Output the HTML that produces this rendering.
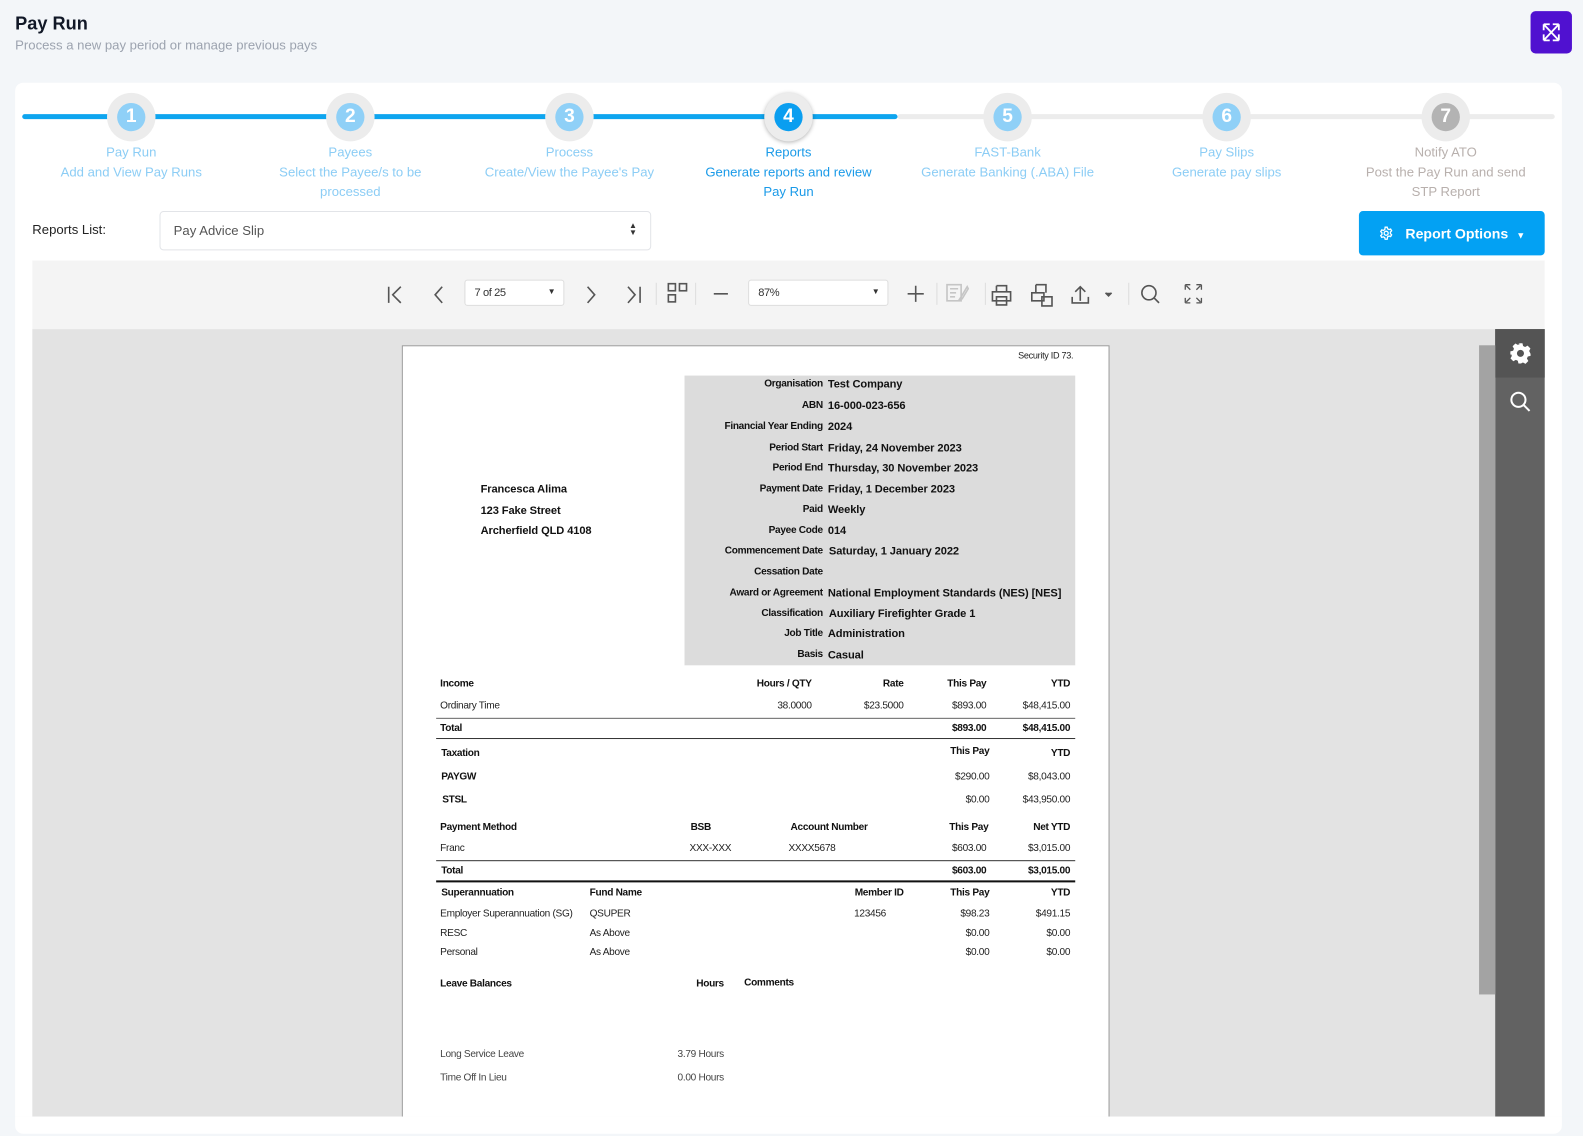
<!DOCTYPE html>
<html><head><meta charset="utf-8"><style>
*{margin:0;padding:0;box-sizing:border-box}
html,body{width:1583px;height:1136px;overflow:hidden;background:#f3f6f9}
#w{width:1568px;height:1125px;position:relative;transform:scale(1.0096);transform-origin:0 0;font-family:"Liberation Sans",sans-serif}
.a{position:absolute;white-space:nowrap}
.t{position:absolute;white-space:nowrap;font-size:10px;color:#222;line-height:14px;letter-spacing:-0.3px}
.b{font-weight:bold;color:#111}
.v{font-size:11px;font-weight:bold;color:#111;letter-spacing:-0.1px}
.st{position:absolute;text-align:center;font-size:13px;line-height:19.5px;width:220px;color:#8ccdf5}
.circ{position:absolute;width:48px;height:48px;border-radius:50%;background:#ececec;top:92px}
.circ div{position:absolute;left:10px;top:10px;width:28px;height:28px;border-radius:50%;background:#8fd0f7;color:#fff;font-weight:bold;font-size:19px;text-align:center;line-height:28px}
.ic{position:absolute;top:278px}
.hl{position:absolute;height:1px;background:#333;left:432px;width:633px}
</style></head><body><div id="w">
<div class="a" style="left:15px;top:13px;font-size:18px;font-weight:bold;color:#111827">Pay Run</div>
<div class="a" style="left:15px;top:37px;font-size:13px;color:#9ca3af">Process a new pay period or manage previous pays</div>
<div class="a" style="left:1516px;top:11px;width:41px;height:42px;background:#5011d0;border-radius:5px">
<svg width="41" height="42" viewBox="0 0 41 42" fill="none" stroke="#fff" stroke-width="1.8"><path d="M13 13l15 16M28 13L13 29M13 13h6M13 13v6M28 13h-6M28 13v6M13 29h6M13 29v-6M28 29h-6M28 29v-6"/></svg></div>

<div class="a" style="left:15px;top:82px;width:1532px;height:1041px;background:#fff;border-radius:8px"></div>
<div class="a" style="left:22px;top:113px;width:867px;height:5px;background:#0ea5ef;border-radius:3px"></div>
<div class="a" style="left:889px;top:113px;width:651px;height:5px;background:#ececec;border-radius:3px"></div>

<div class="circ" style="left:106px"><div>1</div></div>
<div class="circ" style="left:323px"><div>2</div></div>
<div class="circ" style="left:540px"><div>3</div></div>
<div class="circ" style="left:757px;box-shadow:0 1px 4px rgba(0,0,0,.3)"><div style="background:#0a9ef0">4</div></div>
<div class="circ" style="left:974px"><div>5</div></div>
<div class="circ" style="left:1191px"><div>6</div></div>
<div class="circ" style="left:1408px"><div style="background:#b3b3b3">7</div></div>

<div class="st" style="left:20px;top:141px">Pay Run<br>Add and View Pay Runs</div>
<div class="st" style="left:237px;top:141px">Payees<br>Select the Payee/s to be<br>processed</div>
<div class="st" style="left:454px;top:141px">Process<br>Create/View the Payee's Pay</div>
<div class="st" style="left:671px;top:141px;color:#1a9ae8">Reports<br>Generate reports and review<br>Pay Run</div>
<div class="st" style="left:888px;top:141px">FAST-Bank<br>Generate Banking (.ABA) File</div>
<div class="st" style="left:1105px;top:141px">Pay Slips<br>Generate pay slips</div>
<div class="st" style="left:1322px;top:141px;color:#b8b0ad">Notify ATO<br>Post the Pay Run and send<br>STP Report</div>

<div class="a" style="left:32px;top:220px;font-size:13px;color:#222">Reports List:</div>
<div class="a" style="left:158px;top:209px;width:487px;height:39px;border:1px solid #e2e4e8;border-radius:4px;font-size:13px;color:#555;padding:11px 13px">Pay Advice Slip<span style="position:absolute;right:13px;top:10px;font-size:8px;line-height:7px;color:#333">▲<br>▼</span></div>
<div class="a" style="left:1346px;top:209px;width:184px;height:44px;background:#03a1f3;border-radius:4px;color:#fff;font-weight:bold;font-size:14px;line-height:44px;padding-left:46px">Report Options <span style="font-size:9px;margin-left:4px">▼</span>
<svg style="position:absolute;left:20px;top:15px" width="14" height="14" viewBox="0 0 14 14" fill="none" stroke="#fff" stroke-width="1.3"><circle cx="7" cy="7" r="2"/><path d="M6 1h2l.4 1.6 1.4.8 1.6-.5 1 1.7-1.2 1.2v1.6l1.2 1.2-1 1.7-1.6-.5-1.4.8L8 13H6l-.4-1.6-1.4-.8-1.6.5-1-1.7 1.2-1.2V6.6L1.6 5.4l1-1.7 1.6.5 1.4-.8z"/></svg></div>

<div class="a" style="left:32px;top:258px;width:1498px;height:68px;background:#f4f4f4"></div>
<div class="a" style="left:32px;top:326px;width:1498px;height:780px;background:#e3e3e3"></div>
<svg class="ic" style="left:370px" width="840" height="28" viewBox="0 0 840 28" fill="none" stroke="#555" stroke-width="1.6">
<path d="M15 6v16M27 6l-8 8 8 8"/><path d="M68 6l-7 8 7 8"/>
<path d="M212 6l7 8-7 8"/><path d="M252 6l7 8-7 8M264 6v16"/>
<path d="M280 2v22M319 2v22" stroke="#ddd" stroke-width="1"/>
<rect x="292" y="3" width="7" height="7"/><rect x="303" y="3" width="7" height="7"/><rect x="292" y="14" width="7" height="7"/>
<path d="M337 13h14"/><path d="M529 13h16M537 5v16"/>
<path d="M558 2v22M606 2v22M748 2v22" stroke="#ddd" stroke-width="1"/>
<path d="M568 4h14v16h-14zM571 8h8M571 12h6M571 16h5M588 6l-6 10-2 3 3-1 6-10z" stroke="#c5c5c5"/>
<path d="M617 5h10v6M617 11v-6M613 11h18v9h-18zM617 16h10v8h-10z"/>
<path d="M656 4h10v8M656 12v-8M652 12h12v8h-12zM662 16h10v9h-10z"/>
<path d="M700 20v-14M695 11l5-5 5 5M692 16v6h16v-6"/><path d="M725 12l3 3 3-3" fill="#555"/>
<circle cx="768" cy="12" r="7"/><path d="M773 17l5 5"/>
<path d="M804 4v5M804 4h5M820 4h-5M820 4v5M804 22v-5M804 22h5M820 22h-5M820 22v-5M805 5l4 4M819 5l-4 4M805 21l4-4M819 21l-4-4" stroke-width="1.3"/>
</svg>
<div class="a" style="left:460px;top:277px;width:99px;height:26px;background:#fff;border:1px solid #ddd;border-radius:3px;font-size:11px;color:#333;padding:6px 9px;letter-spacing:-.4px">7 of 25<span style="position:absolute;right:8px;top:6px;font-size:8px">▼</span></div>
<div class="a" style="left:741px;top:277px;width:139px;height:26px;background:#fff;border:1px solid #ddd;border-radius:3px;font-size:11px;color:#333;padding:6px 9px;letter-spacing:-.4px">87%<span style="position:absolute;right:8px;top:6px;font-size:8px">▼</span></div>

<div class="a" style="left:1481px;top:326px;width:49px;height:780px;background:#626262"></div>
<div class="a" style="left:1481px;top:326px;width:49px;height:48px;background:#545454"></div>
<div class="a" style="left:1465px;top:342px;width:16px;height:643px;background:#a3a3a3"></div>
<svg class="a" style="left:1494px;top:338px" width="24" height="24" viewBox="0 0 24 24"><path fill="#fff" d="M10 2h4l.6 2.7 2 1 2.5-1.3 2.8 2.8-1.3 2.5 1 2L22 12.5v-1 3l-2.7.6-.9 2 1.4 2.5-2.8 2.8-2.5-1.4-2 .9L14 22h-4l-.6-2.7-2-.9-2.5 1.4-2.8-2.8 1.4-2.5-.9-2L2 14v-4l2.7-.6.9-2-1.4-2.4 2.8-2.8 2.4 1.4 2-.9z"/><circle cx="12" cy="12" r="3.5" fill="#545454"/></svg>
<svg class="a" style="left:1494px;top:386px" width="24" height="24" viewBox="0 0 24 24" fill="none" stroke="#fff" stroke-width="2"><circle cx="10" cy="10" r="7"/><path d="M15 15l6 6"/></svg>

<div class="a" style="left:398px;top:342px;width:701px;height:780px;background:#fff;border:1px solid #9a9a9a"></div>
<div class="t" style="right:505px;top:345px;font-size:9px">Security ID 73.</div>
<div class="a" style="left:678px;top:372px;width:387px;height:287px;background:#dcdcdc"></div>

<div class="t b" style="right:753px;top:374px">Organisation</div><div class="t v" style="left:820px;top:374px">Test Company</div>
<div class="t b" style="right:753px;top:395px">ABN</div><div class="t v" style="left:820px;top:395px">16-000-023-656</div>
<div class="t b" style="right:753px;top:416px">Financial Year Ending</div><div class="t v" style="left:820px;top:416px">2024</div>
<div class="t b" style="right:753px;top:437px">Period Start</div><div class="t v" style="left:820px;top:437px">Friday, 24 November 2023</div>
<div class="t b" style="right:753px;top:457px">Period End</div><div class="t v" style="left:820px;top:457px">Thursday, 30 November 2023</div>
<div class="t b" style="right:753px;top:478px">Payment Date</div><div class="t v" style="left:820px;top:478px">Friday, 1 December 2023</div>
<div class="t b" style="right:753px;top:498px">Paid</div><div class="t v" style="left:820px;top:498px">Weekly</div>
<div class="t b" style="right:753px;top:519px">Payee Code</div><div class="t v" style="left:820px;top:519px">014</div>
<div class="t b" style="right:753px;top:539px">Commencement Date</div><div class="t v" style="left:821px;top:539px">Saturday, 1 January 2022</div>
<div class="t b" style="right:753px;top:560px">Cessation Date</div>
<div class="t b" style="right:753px;top:581px">Award or Agreement</div><div class="t v" style="left:820px;top:581px">National Employment Standards (NES) [NES]</div>
<div class="t b" style="right:753px;top:601px">Classification</div><div class="t v" style="left:821px;top:601px">Auxiliary Firefighter Grade 1</div>
<div class="t b" style="right:753px;top:621px">Job Title</div><div class="t v" style="left:820px;top:621px">Administration</div>
<div class="t b" style="right:753px;top:642px">Basis</div><div class="t v" style="left:820px;top:642px">Casual</div>

<div class="t v" style="left:476px;top:478px">Francesca Alima</div>
<div class="t v" style="left:476px;top:499px">123 Fake Street</div>
<div class="t v" style="left:476px;top:519px">Archerfield QLD 4108</div>

<div class="t b" style="left:436px;top:671px">Income</div><div class="t b" style="right:764px;top:671px">Hours / QTY</div><div class="t b" style="right:673px;top:671px">Rate</div><div class="t b" style="right:591px;top:671px">This Pay</div><div class="t b" style="right:508px;top:671px">YTD</div>
<div class="t" style="left:436px;top:693px">Ordinary Time</div><div class="t" style="right:764px;top:693px">38.0000</div><div class="t" style="right:673px;top:693px">$23.5000</div><div class="t" style="right:591px;top:693px">$893.00</div><div class="t" style="right:508px;top:693px">$48,415.00</div>
<div class="hl" style="top:711px;background:#666"></div>
<div class="t b" style="left:436px;top:715px">Total</div><div class="t b" style="right:591px;top:715px">$893.00</div><div class="t b" style="right:508px;top:715px">$48,415.00</div>
<div class="hl" style="top:731px"></div>
<div class="t b" style="left:437px;top:740px">Taxation</div><div class="t b" style="right:588px;top:738px">This Pay</div><div class="t b" style="right:508px;top:740px">YTD</div>
<div class="t b" style="left:437px;top:763px">PAYGW</div><div class="t" style="right:588px;top:763px">$290.00</div><div class="t" style="right:508px;top:763px">$8,043.00</div>
<div class="t b" style="left:438px;top:786px">STSL</div><div class="t" style="right:588px;top:786px">$0.00</div><div class="t" style="right:508px;top:786px">$43,950.00</div>
<div class="t b" style="left:436px;top:813px">Payment Method</div><div class="t b" style="left:684px;top:813px">BSB</div><div class="t b" style="left:783px;top:813px">Account Number</div><div class="t b" style="right:589px;top:813px">This Pay</div><div class="t b" style="right:508px;top:813px">Net YTD</div>
<div class="t" style="left:436px;top:834px">Franc</div><div class="t" style="left:683px;top:834px">XXX-XXX</div><div class="t" style="left:781px;top:834px">XXXX5678</div><div class="t" style="right:591px;top:834px">$603.00</div><div class="t" style="right:508px;top:834px">$3,015.00</div>
<div class="hl" style="top:852px"></div>
<div class="t b" style="left:437px;top:856px">Total</div><div class="t b" style="right:591px;top:856px">$603.00</div><div class="t b" style="right:508px;top:856px">$3,015.00</div>
<div class="hl" style="top:872px;height:2px;background:#111"></div>
<div class="t b" style="left:437px;top:878px">Superannuation</div><div class="t b" style="left:584px;top:878px">Fund Name</div><div class="t b" style="right:673px;top:878px">Member ID</div><div class="t b" style="right:588px;top:878px">This Pay</div><div class="t b" style="right:508px;top:878px">YTD</div>
<div class="t" style="left:436px;top:899px">Employer Superannuation (SG)</div><div class="t" style="left:584px;top:899px">QSUPER</div><div class="t" style="left:846px;top:899px">123456</div><div class="t" style="right:588px;top:899px">$98.23</div><div class="t" style="right:508px;top:899px">$491.15</div>
<div class="t" style="left:436px;top:918px">RESC</div><div class="t" style="left:584px;top:918px">As Above</div><div class="t" style="right:588px;top:918px">$0.00</div><div class="t" style="right:508px;top:918px">$0.00</div>
<div class="t" style="left:436px;top:937px">Personal</div><div class="t" style="left:584px;top:937px">As Above</div><div class="t" style="right:588px;top:937px">$0.00</div><div class="t" style="right:508px;top:937px">$0.00</div>
<div class="t b" style="left:436px;top:968px">Leave Balances</div><div class="t b" style="right:851px;top:968px">Hours</div><div class="t b" style="left:737px;top:967px">Comments</div>
<div class="t" style="left:436px;top:1038px;color:#444">Long Service Leave</div><div class="t" style="right:851px;top:1038px;color:#444">3.79 Hours</div>
<div class="t" style="left:436px;top:1061px;color:#444">Time Off In Lieu</div><div class="t" style="right:851px;top:1061px;color:#444">0.00 Hours</div>
<div class="a" style="left:0;top:1106px;width:1568px;height:30px;background:#f3f6f9"></div>
<div class="a" style="left:15px;top:1106px;width:1532px;height:17px;background:#fff;border-radius:0 0 8px 8px"></div>
</div></body></html>
